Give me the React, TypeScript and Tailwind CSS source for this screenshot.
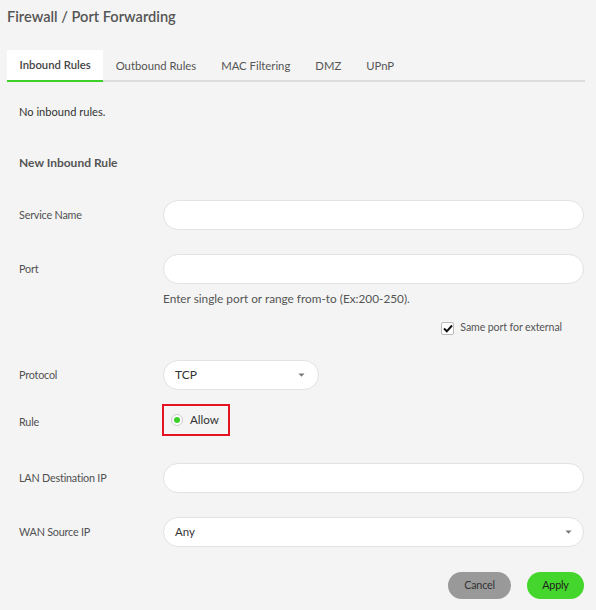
import React from "react";

function Caret() {
  return (
    <svg width="7" height="4" viewBox="0 0 7 4" className="shrink-0">
      <path d="M0.5 0.5 L6.5 0.5 L3.5 3.8 Z" fill="#777" />
    </svg>
  );
}

function Row({ label, children, className, labelClass = "" }: { label: string; children: React.ReactNode; className: string; labelClass?: string }) {
  return (
    <div className={"flex items-center " + className}>
      <div className={"w-[144px] shrink-0 text-[10.8px] tracking-[-0.2px] text-[#505050] " + labelClass}>{label}</div>
      {children}
    </div>
  );
}

export default function App() {
  const tabs = ["Inbound Rules", "Outbound Rules", "MAC Filtering", "DMZ", "UPnP"];
  return (
    <div className="w-[596px] h-[610px] bg-[#f4f4f4] font-['Lato','Noto_Sans',sans-serif] overflow-hidden">
      <div className="pl-[7px] pt-[7px]">
        <div className="h-[20px] leading-[20px] text-[14.6px] font-semibold text-[#555]">
          Firewall / Port Forwarding
        </div>
        <div className="mt-[23px] w-[578px] flex border-b-2 border-[#dcdcdc]">
          {tabs.map((t, i) => (
            <div
              key={t}
              className={
                i === 0
                  ? "h-[32px] -mb-[2px] px-[12.5px] flex items-center bg-white border-b-2 border-[#3fcf2a] text-[11.3px] font-semibold text-[#444]"
                  : "h-[32px] -mb-[2px] px-[12.5px] flex items-center text-[11.3px] text-[#555]"
              }
            >
              {t}
            </div>
          ))}
        </div>
        <div className="ml-[12px] w-[565px]">
          <div className="mt-[20px] h-[20px] leading-[20px] text-[11.1px] text-[#333]">No inbound rules.</div>
          <div className="mt-[31px] h-[20px] leading-[20px] text-[12px] font-bold text-[#555]">New Inbound Rule</div>
          <Row label="Service Name" className="mt-[27px]">
            <div className="flex-1 h-[30px] rounded-full bg-white border border-[#e2e2e2]" />
          </Row>
          <Row label="Port" className="mt-[24px]">
            <div className="flex-1 h-[30px] rounded-full bg-white border border-[#e2e2e2]" />
          </Row>
          <div className="mt-[7px] ml-[144px] h-[16px] leading-[16px] text-[11.8px] text-[#555]">
            Enter single port or range from-to (Ex:200-250).
          </div>
          <div className="mt-[13px] h-[16px] flex items-center justify-end pr-[22px]">
            <div className="w-[13px] h-[13px] rounded-[2px] border border-[#bbb] bg-white flex items-center justify-center mr-[6px]">
              <svg width="10" height="9" viewBox="0 0 10 9">
                <path d="M1 4.5 L3.8 7.3 L9 1.5" stroke="#111" strokeWidth="2" fill="none" />
              </svg>
            </div>
            <span className="text-[10.6px] tracking-[-0.1px] text-[#555]">Same port for external</span>
          </div>
          <Row label="Protocol" className="mt-[24px]">
            <div className="w-[156px] h-[30px] rounded-full bg-white border border-[#e2e2e2] flex items-center justify-between pl-[11px] pr-[13px]">
              <span className="text-[12px] text-[#333]">TCP</span>
              <Caret />
            </div>
          </Row>
          <Row label="Rule" className="mt-[14px]" labelClass="pt-[5px]">
            <div className="-ml-[1px] w-[68px] h-[32px] border-2 border-[#e3141f] flex items-center pl-[7px]">
              <div className="w-[12px] h-[12px] rounded-full border border-[#ccc] bg-white flex items-center justify-center">
                <div className="w-[6px] h-[6px] rounded-full bg-[#3bd12a]" />
              </div>
              <span className="ml-[7px] text-[11.6px] text-[#333]">Allow</span>
            </div>
          </Row>
          <Row label="LAN Destination IP" className="mt-[27px]">
            <div className="flex-1 h-[30px] rounded-full bg-white border border-[#e2e2e2]" />
          </Row>
          <Row label="WAN Source IP" className="mt-[24px]">
            <div className="flex-1 h-[30px] rounded-full bg-white border border-[#e2e2e2] flex items-center justify-between pl-[11px] pr-[11px]">
              <span className="text-[11.5px] text-[#333]">Any</span>
              <Caret />
            </div>
          </Row>
          <div className="mt-[25px] flex justify-end gap-[16px]">
            <div className="w-[63px] h-[27px] rounded-full bg-[#999] flex items-center justify-center text-[10.8px] tracking-[-0.2px] text-[#333]">
              Cancel
            </div>
            <div className="w-[57px] h-[27px] rounded-full bg-[#44d62c] flex items-center justify-center text-[10.8px] tracking-[-0.2px] text-[#222]">
              Apply
            </div>
          </div>
        </div>
      </div>
    </div>
  );
}
